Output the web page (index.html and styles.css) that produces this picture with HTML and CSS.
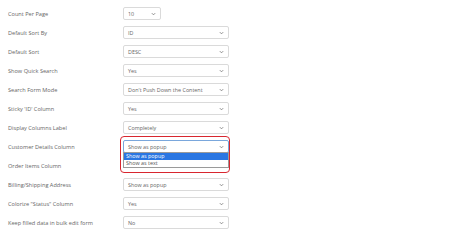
FILE: index.html
```html
<!DOCTYPE html>
<html lang="en">
<head>
    <meta charset="UTF-8">
    <title>Settings</title>
    <link rel="stylesheet" href="styles.css">
</head>
<body>
    <div class="settings">
        <div class="row">
            <div class="label">Count Per Page</div>
            <div class="select small"><span>10</span><svg class="chev" viewBox="0 0 6 4"><path d="M1 1 L3 3 L5 1"/></svg></div>
        </div>
        <div class="row">
            <div class="label">Default Sort By</div>
            <div class="select"><span>ID</span><svg class="chev" viewBox="0 0 6 4"><path d="M1 1 L3 3 L5 1"/></svg></div>
        </div>
        <div class="row">
            <div class="label">Default Sort</div>
            <div class="select"><span>DESC</span><svg class="chev" viewBox="0 0 6 4"><path d="M1 1 L3 3 L5 1"/></svg></div>
        </div>
        <div class="row">
            <div class="label">Show Quick Search</div>
            <div class="select"><span>Yes</span><svg class="chev" viewBox="0 0 6 4"><path d="M1 1 L3 3 L5 1"/></svg></div>
        </div>
        <div class="row">
            <div class="label">Search Form Mode</div>
            <div class="select"><span>Don't Push Down the Content</span><svg class="chev" viewBox="0 0 6 4"><path d="M1 1 L3 3 L5 1"/></svg></div>
        </div>
        <div class="row">
            <div class="label">Sticky 'ID' Column</div>
            <div class="select"><span>Yes</span><svg class="chev" viewBox="0 0 6 4"><path d="M1 1 L3 3 L5 1"/></svg></div>
        </div>
        <div class="row">
            <div class="label">Display Columns Label</div>
            <div class="select"><span>Completely</span><svg class="chev" viewBox="0 0 6 4"><path d="M1 1 L3 3 L5 1"/></svg></div>
        </div>
        <div class="row">
            <div class="label">Customer Details Column</div>
            <div class="select focused">
                <span>Show as popup</span><svg class="chev" viewBox="0 0 6 4"><path d="M1 1 L3 3 L5 1"/></svg>
                <div class="options">
                    <div class="option active">Show as popup</div>
                    <div class="option">Show as text</div>
                </div>
                <div class="highlight"></div>
            </div>
        </div>
        <div class="row">
            <div class="label">Order Items Column</div>
            <!-- select hidden behind the open dropdown -->
            <div class="select covered"></div>
        </div>
        <div class="row">
            <div class="label">Billing/Shipping Address</div>
            <div class="select"><span>Show as popup</span><svg class="chev" viewBox="0 0 6 4"><path d="M1 1 L3 3 L5 1"/></svg></div>
        </div>
        <div class="row">
            <div class="label">Colorize "Status" Column</div>
            <div class="select"><span>Yes</span><svg class="chev" viewBox="0 0 6 4"><path d="M1 1 L3 3 L5 1"/></svg></div>
        </div>
        <div class="row">
            <div class="label">Keep filled data in bulk edit form</div>
            <div class="select"><span>No</span><svg class="chev" viewBox="0 0 6 4"><path d="M1 1 L3 3 L5 1"/></svg></div>
        </div>
    </div>
</body>
</html>
```

FILE: styles.css
```css
body {
    margin: 0;
    padding: 0;
    background: #fff;
    font-family: "Open Sans", "Noto Sans", sans-serif;
    color: #666;
}

.settings {
    padding: 4px 0 0 8px;
}

.row {
    display: flex;
    align-items: center;
    height: 19px;
}

.label {
    width: 115px;
    font-size: 5.6px;
    color: #666;
}

.select {
    position: relative;
    display: flex;
    align-items: center;
    justify-content: space-between;
    box-sizing: border-box;
    width: 106px;
    height: 13px;
    padding: 0 4px 0 4px;
    border: 1px solid #dadada;
    border-radius: 2px;
    background: #fff;
    font-size: 5.4px;
    color: #666;
}

.select.small {
    width: 38px;
}

.select.focused {
    border-color: #7aa7dc;
}

.select.covered {
    border-color: #fff;
}

.chev {
    width: 5px;
    height: 4px;
    fill: none;
    stroke: #777;
    stroke-width: 1;
}

.options {
    position: absolute;
    top: 11px;
    left: -1px;
    width: 106px;
    box-sizing: border-box;
    border: 1px solid #9a9a9a;
    background: #fff;
    z-index: 2;
}

.option {
    height: 7px;
    line-height: 7px;
    padding-left: 2px;
    font-size: 5.4px;
    color: #555;
}

.option.active {
    background: #2a76e2;
    color: #fff;
}

.highlight {
    position: absolute;
    top: -5px;
    left: -4px;
    width: 110px;
    height: 37px;
    box-sizing: border-box;
    border: 1.5px solid #d8262f;
    border-radius: 4px;
    z-index: 3;
}
```
